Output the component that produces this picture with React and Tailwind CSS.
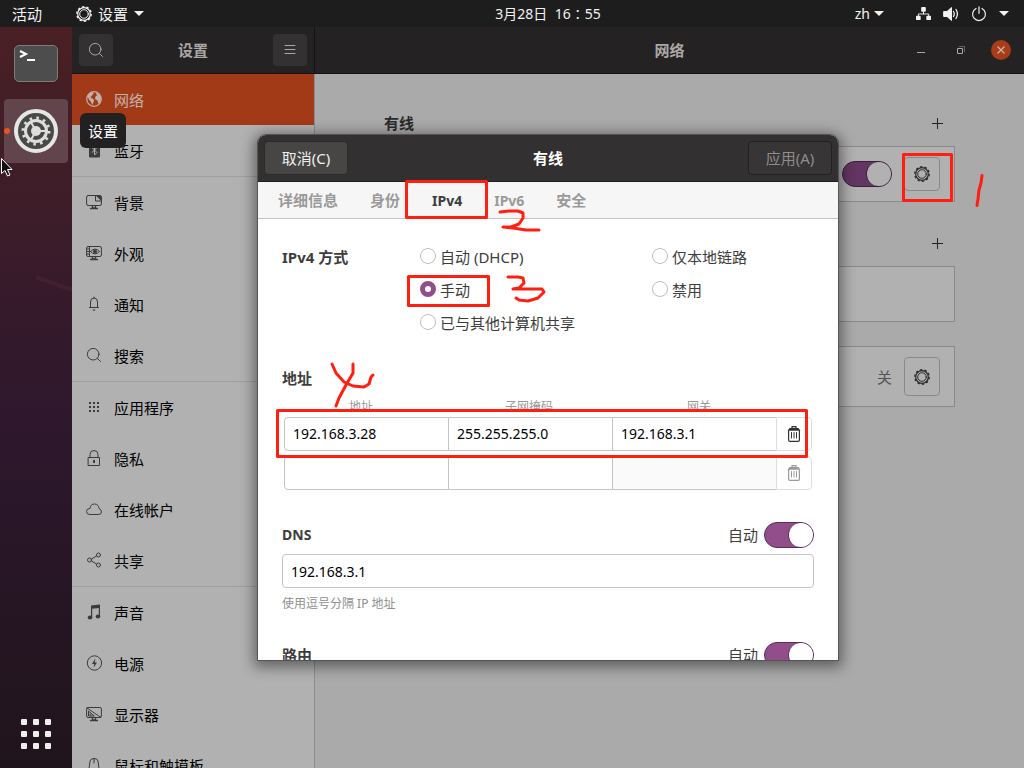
import React, { useState } from "react";

const stroke = {
  fill: "none",
  stroke: "currentColor",
  strokeWidth: 1,
  strokeLinecap: "round",
  strokeLinejoin: "round",
};

const Icon = ({ children, className = "size-4" }) => (
  <svg viewBox="0 0 16 16" className={className} aria-hidden="true" {...stroke}>
    {children}
  </svg>
);

const GearIcon = () => (
  <Icon>
    <circle cx="8" cy="8" r="6.3" strokeWidth="1.2" />
    <circle cx="8" cy="8" r="4.3" strokeWidth="1" />
    <circle cx="8" cy="8" r="7.2" strokeWidth="1.4" strokeLinecap="butt" strokeDasharray="2.4 2.124" />
  </Icon>
);

const SearchIcon = () => (
  <Icon>
    <circle cx="7.2" cy="7.2" r="5.8" />
    <path d="M11.5 11.5 14.5 14.5" />
  </Icon>
);

const TrashIcon = () => (
  <Icon>
    <path d="M6 2V.7h4V2" strokeWidth="1.3" />
    <path d="M1.5 4.8 3.5 2h9l2 2.800z" fill="currentColor" stroke="none" />
    <path d="M2.600 4.500V14q0 1.400 1.400 1.400h8q1.400 0 1.400-1.400V4.500" strokeWidth="1.200" />
    <path d="M5.500 6.500v5.500M8 6.500v5.500M10.500 6.500v5.500" />
  </Icon>
);

const Caret = () => (
  <svg viewBox="0 0 10 5" className="h-[5px] w-[10px]" aria-hidden="true">
    <path d="M0 0h10L5 5z" fill="currentColor" />
  </svg>
);

const screen = (
  <>
    <rect x=".6" y="1.500" width="14.800" height="10" rx="1.500" />
    <path d="M6.500 12v2h3v-2M4.500 14.500h7" strokeWidth="1.300" />
  </>
);

const icons = {
  network: (
    <Icon>
      <circle cx="8" cy="8" r="7.300" strokeWidth="1.200" />
      <path
        d="M1.500 5 4 2l3-1 .5 2L6 4.500 4.500 6l1 1.500H7L8 9.500 6.500 14l-1.500-3-2-2.500zM9.500 1.500l4 2L15 7l-.5 4-2 2-1-3.500L9 8l.5-2.500L11 4.500z"
        fill="currentColor"
        stroke="none"
      />
    </Icon>
  ),
  bluetooth: (
    <Icon>
      <rect x="3" y=".5" width="11" height="15" rx="1" fill="currentColor" stroke="none" />
      <path d="M6 5.500 11 10.500 8.500 13V3L11 5.500 6 10.500" stroke="#b1b1b1" />
    </Icon>
  ),
  background: (
    <Icon>
      {screen}
      <path d="M9.500 1.500v5.500h6" />
      <path d="M9.500 1.500h4q2 0 2 2V7z" fill="currentColor" stroke="none" />
    </Icon>
  ),
  appearance: (
    <Icon>
      {screen}
      <path d="M3.500 1.500v10M1 4h2.500M1 6.500h2.500M1 9h2.500" />
      <path d="M4.500 6.500Q9 1.500 13.500 6.500 9 11.500 4.500 6.500" />
      <circle cx="9" cy="6.500" r="1.600" fill="currentColor" />
    </Icon>
  ),
  bell: (
    <Icon>
      <path d="M3.500 11.500h9M4.500 11.500V6Q4.500 2 8 2t3.500 4v5.500M8 2V1" />
      <path d="M6.500 13.500h3q-.3 1.200-1.500 1.200t-1.500-1.200" fill="currentColor" stroke="none" />
    </Icon>
  ),
  search: <SearchIcon />,
  apps: (
    <Icon>
      <g fill="currentColor" stroke="none">
        {[3, 7, 11].map((x) => [3, 7, 11].map((y) => <rect key={`${x}-${y}`} x={x} y={y} width="2" height="2" />))}
      </g>
    </Icon>
  ),
  lock: (
    <Icon>
      <rect x="2.500" y="7.500" width="11" height="8" />
      <path d="M4 7.500V4.500Q4 .5 8 .5t4 4v3" />
      <rect x="7" y="10" width="2" height="3" fill="currentColor" stroke="none" />
    </Icon>
  ),
  cloud: (
    <Icon>
      <path d="M3.500 13.500Q.5 13.500.5 10.500T4 7.500Q4.500 3 8.500 3t4.500 4.500Q15.500 8.500 15.500 11t-3 2.500z" />
    </Icon>
  ),
  share: (
    <Icon>
      <circle cx="3.500" cy="8" r="2" />
      <circle cx="12.500" cy="3" r="2" />
      <circle cx="12.500" cy="13" r="2" />
      <path d="m5.500 7 5-3M5.500 9l5 3" />
    </Icon>
  ),
  music: (
    <Icon>
      <path d="M5 1.500 14 .5V12h-1.200V4L6.200 4.700V14H5z" fill="currentColor" stroke="none" />
      <ellipse cx="4" cy="13.500" rx="2.300" ry="2" fill="currentColor" stroke="none" />
      <ellipse cx="12" cy="12.500" rx="2.300" ry="2" fill="currentColor" stroke="none" />
    </Icon>
  ),
  power: (
    <Icon>
      <circle cx="8.500" cy="8" r="7.200" />
      <path d="M9.300 3.500 6 9h2.200l-.5 3.500L11 7.500H8.800z" fill="currentColor" stroke="none" />
    </Icon>
  ),
  display: (
    <Icon>
      {screen}
      <path d="m1 2 14 9.500M2.500 5.500v4.500h5.500zM4 8v1h1" />
    </Icon>
  ),
  mouse: (
    <Icon>
      <path d="M2.500 16 4 4Q4.500 1.500 8 1.500T12 4l1.500 12M8 1.500V6" />
    </Icon>
  ),
};

const menuGroups = [
  [
    { name: "网络", icon: "network", active: true },
    { name: "蓝牙", icon: "bluetooth" },
  ],
  [
    { name: "背景", icon: "background" },
    { name: "外观", icon: "appearance" },
    { name: "通知", icon: "bell" },
    { name: "搜索", icon: "search" },
  ],
  [
    { name: "应用程序", icon: "apps" },
    { name: "隐私", icon: "lock" },
    { name: "在线帐户", icon: "cloud" },
    { name: "共享", icon: "share" },
  ],
  [
    { name: "声音", icon: "music" },
    { name: "电源", icon: "power" },
    { name: "显示器", icon: "display" },
    { name: "鼠标和触摸板", icon: "mouse" },
  ],
];

const TopBar = () => (
  <header className="flex h-[27px] shrink-0 items-center bg-[#1d1d1d] text-[#f2f2f2]">
    <button className="w-[72px] pl-3 text-left">活动</button>
    <div className="grid grow grid-cols-[1fr_auto_1fr] items-center">
      <button className="flex items-center gap-[6px] justify-self-start pl-1">
        <GearIcon />
        设置
        <Caret />
      </button>
      <time className="whitespace-pre text-[14px]">3月28日  16∶55</time>
      <div className="flex items-center justify-self-end pr-[15px]">
        <button className="mr-8 flex items-center gap-1 text-[14px]">
          zh
          <Caret />
        </button>
        <button className="flex items-center gap-3" aria-label="系统">
          <Icon className="size-[15px]">
            <g fill="currentColor" stroke="none">
              <rect x="5.500" y="1" width="5" height="5" rx="1" />
              <rect x="0" y="10.500" width="5" height="4.500" rx="1" />
              <rect x="11" y="10.500" width="5" height="4.500" rx="1" />
            </g>
            <path d="M8 6v2.500M2.500 10.500v-2h11v2" />
          </Icon>
          <Icon>
            <path d="M1 5.500h3L8.500 1.500v13L4 10.500H1z" fill="currentColor" />
            <path d="M10.500 5.500q1.500 2.500 0 5M13 3.500q2.800 4.500 0 9" strokeWidth="1.300" />
          </Icon>
          <Icon>
            <path d="M5 2.500a6.400 6.400 0 1 0 6 0M8 .8v6.500" strokeWidth="1.200" />
          </Icon>
          <Caret />
        </button>
      </div>
    </div>
  </header>
);

const Dock = () => (
  <nav className="relative flex w-[72px] shrink-0 flex-col items-center bg-linear-to-b from-[#4a2024] via-[#2d172d] via-55% to-[#20141b] pb-[19px] pt-[18px]">
    <svg className="absolute right-0 top-[248px] h-5 w-9" viewBox="0 0 36 20" aria-hidden="true">
      <path d="M0 2 36 15" stroke="#42202e" strokeWidth="4" />
    </svg>
    <button
      aria-label="终端"
      className="h-[37px] w-11 rounded-[5px] border border-[#7a8078] bg-[#4d4d4d] shadow"
    >
      <svg viewBox="0 0 42 35" aria-hidden="true" fill="none" stroke="#fff" strokeWidth="2">
        <path d="m5 5 6 3-6 3M12 14h8" />
      </svg>
    </button>
    <button
      aria-label="设置"
      className="relative mt-[17px] flex size-16 items-center justify-center rounded bg-[#62444c]"
    >
      <span className="absolute left-0 size-[6px] rounded-full bg-[#e95420]" />
      <svg viewBox="0 0 44 44" className="size-11" aria-hidden="true" fill="none">
        <circle cx="22" cy="22" r="20" fill="#484a49" stroke="#e6e6e4" strokeWidth="4" />
        <circle cx="22" cy="22" r="10.500" stroke="#dededc" strokeWidth="3" />
        <circle cx="22" cy="22" r="13" stroke="#dededc" strokeWidth="3" strokeDasharray="2.500 4.307" />
        <circle cx="22" cy="22" r="5" fill="#dededc" />
        <path d="M22 22h10M22 22l-5-8.700M22 22l-5 8.700" stroke="#dededc" strokeWidth="2" />
      </svg>
      <span
        role="tooltip"
        className="absolute left-[76px] top-[14px] z-20 flex h-[35px] w-[46px] items-center justify-center rounded-md bg-[#222020] text-white"
      >
        设置
      </span>
    </button>
    <button aria-label="显示应用程序" className="mt-auto grid grid-cols-3 gap-[6px]">
      {[...new Array(9)].map((_, index) => (
        <span key={index} className="size-[6px] rounded-[1px] bg-[#f0eeec]" />
      ))}
    </button>
  </nav>
);

const Sidebar = () => (
  <aside className="flex w-[243px] shrink-0 flex-col overflow-hidden">
    <div className="flex h-[47px] shrink-0 items-center justify-between border-b border-r border-[#141313] bg-[#242223] px-[7px] text-[#aaa8a6]">
      <button
        aria-label="搜索"
        className="flex h-8 w-[34px] items-center justify-center rounded bg-[#333132]"
      >
        <SearchIcon />
      </button>
      <h1 className="font-bold">设置</h1>
      <button
        aria-label="菜单"
        className="flex h-8 w-[34px] items-center justify-center rounded bg-[#333132]"
      >
        <Icon>
          <path d="M3 3.500h10M3 7.500h10M3 11.500h10" />
        </Icon>
      </button>
    </div>
    <div className="min-h-0 grow overflow-hidden border-r border-[#8d8d8d] bg-[#b1b1b1]">
      {menuGroups.map((group, index) => (
        <ul key={index} className="border-b border-[#a0a0a0]">
          {group.map((item) => (
            <li key={item.name}>
              <a
                href="#"
                className={
                  item.active
                    ? "flex h-[51px] items-center gap-3 bg-[#a23a17] px-[14px] text-[#c2b1aa]"
                    : "flex h-[51px] items-center gap-3 px-[14px] text-black"
                }
              >
                <span className={item.active ? "-mt-[2px]" : "-mt-[2px] text-[#3b3b3b]"}>
                  {icons[item.icon]}
                </span>
                {item.name}
              </a>
            </li>
          ))}
        </ul>
      ))}
    </div>
  </aside>
);

const Switch = ({ label, dim }) => (
  <input
    type="checkbox"
    role="switch"
    aria-label={label}
    defaultChecked
    className={
      dim
        ? "flex h-[26px] w-[50px] appearance-none justify-end rounded-full border border-[#3a203b] bg-[#643462] before:h-6 before:w-[25px] before:rounded-full before:border-l before:border-[#3a203b] before:bg-[#b1b1b1]"
        : "flex h-[26px] w-[50px] appearance-none justify-end rounded-full border border-[#572d55] bg-[#924d8b] before:h-6 before:w-[25px] before:rounded-full before:border-l before:border-[#572d55] before:bg-white"
    }
  />
);

const AddButton = ({ label }) => (
  <button aria-label={label} className="flex h-9 w-9 items-center justify-center text-[#222]">
    <svg viewBox="0 0 11 11" className="size-[11px]" aria-hidden="true">
      <path d="M0 5.500h11M5.500 0v11" stroke="currentColor" />
    </svg>
  </button>
);

const NetworkPage = () => (
  <main className="flex min-w-0 grow flex-col">
    <div className="grid h-[47px] shrink-0 grid-cols-[1fr_auto_1fr] items-center border-b border-[#141313] bg-[#242223] text-[#aaa8a6]">
      <span />
      <h2 className="font-bold">网络</h2>
      <div className="flex items-center gap-5 justify-self-end pr-[13px]">
        <button aria-label="最小化" className="flex size-5 items-center justify-center">
          <span className="mt-1 h-px w-2 bg-current" />
        </button>
        <button aria-label="还原" className="flex size-5 items-center justify-center">
          <svg viewBox="0 0 8 8" className="size-2" aria-hidden="true" fill="none" stroke="currentColor">
            <path d="M.5 2.500h5v5h-5z" />
            <path d="M2 .5h5.500V6" opacity=".5" />
          </svg>
        </button>
        <button
          aria-label="关闭"
          className="flex size-5 items-center justify-center rounded-full bg-[#a83c19] text-[#c9b4ac]"
        >
          <svg viewBox="0 0 8 8" className="size-2" aria-hidden="true">
            <path d="m.5.5 7 7m0-7-7 7" stroke="currentColor" strokeWidth="1.300" />
          </svg>
        </button>
      </div>
    </div>
    <div className="grow bg-[#aaa] px-4 pt-[26px]">
      <div className="mx-auto max-w-[571px]">
        <div className="flex h-[46px] items-center justify-between">
          <h3 className="font-bold text-[#2b2b2b]">有线</h3>
          <AddButton label="添加有线" />
        </div>
        <div className="relative flex h-14 items-center justify-end gap-3 border border-[#8a8a8a] bg-[#b1b1b1] pr-[14px]">
          <Switch label="有线" dim />
          <button
            aria-label="有线选项"
            className="flex h-[34px] w-9 items-center justify-center rounded border border-[#8a8a8a] text-[#2b2b2b]"
          >
            <GearIcon />
          </button>
          {/* mark 1 */}
          <svg
            viewBox="902 153 85 55"
            className="pointer-events-none absolute -right-[33px] top-[6px] z-20 h-[55px] w-[85px]"
            aria-hidden="true"
            fill="none"
            stroke="#ff1f10"
            strokeWidth="3"
            strokeLinecap="round"
            strokeLinejoin="round"
          >
            <rect x="903.500" y="154.500" width="48" height="46" />
            <path d="M982 175.500 981 183 979 190 978 199 977 205.500" />
          </svg>
        </div>
        <div className="mt-[18px] flex h-[46px] items-center justify-end">
          <AddButton label="添加 VPN" />
        </div>
        <div className="h-14 border border-[#8a8a8a] bg-[#b1b1b1]" />
        <div className="mt-6 flex h-[61px] items-center justify-end gap-3 border border-[#8a8a8a] bg-[#b1b1b1] pr-[14px]">
          <span className="text-[#555]">关</span>
          <button
            aria-label="代理选项"
            className="flex h-[39px] w-9 items-center justify-center rounded border border-[#8a8a8a] text-[#2b2b2b]"
          >
            <GearIcon />
          </button>
        </div>
      </div>
    </div>
  </main>
);

const tabs = ["详细信息", "身份", "IPv4", "IPv6", "安全"];

const methods = ["自动 (DHCP)", "仅本地链路", "手动", "禁用", "已与其他计算机共享"];

const addresses = [
  { address: "192.168.3.28", mask: "255.255.255.0", gateway: "192.168.3.1" },
  { address: "", mask: "", gateway: "", empty: true },
];

const WiredDialog = () => {
  const [method, setMethod] = useState("手动");
  return (
    <section
      role="dialog"
      aria-label="有线"
      className="relative h-[525px] max-h-full w-[580px] overflow-hidden rounded-t-lg bg-white text-[#3d3d3d] shadow-[0_0_0_1px_#565454,0_3px_14px_4px_rgba(0,0,0,0.45)]"
    >
      <div className="grid h-[47px] grid-cols-[1fr_auto_1fr] items-center border-b border-[#1f1d1d] bg-[#323030] px-[6px]">
        <button className="h-[34px] w-[84px] justify-self-start rounded border border-[#2c2a2a] bg-[#484644] text-[#eee]">
          取消(C)
        </button>
        <h2 className="font-bold text-white">有线</h2>
        <button
          disabled
          className="h-[34px] w-[84px] justify-self-end rounded border border-[#222020] bg-[#373535] text-[#8f8d8c]"
        >
          应用(A)
        </button>
      </div>

      <div role="tablist" className="flex h-[37px] gap-8 border-b border-[#c4c4c4] bg-[#f6f6f6] pl-5">
        {tabs.map((tab) => (
          <button
            key={tab}
            role="tab"
            aria-selected={tab === "IPv4"}
            className={tab === "IPv4" ? "font-bold text-[#3d3d3d]" : "font-bold text-[#9a9a9a]"}
          >
            {tab.startsWith("IP") ? <span className="text-[14px]">{tab}</span> : tab}
          </button>
        ))}
      </div>

      <div className="px-6 pt-[22px]">
        {/* method */}
        <div className="flex">
          <h3 className="w-[138px] font-bold leading-[33px]">IPv4 方式</h3>
          <div className="grid grow grid-cols-[232px_1fr]">
            {methods.map((item) => (
              <label key={item} className="flex h-[33px] items-center gap-1 pb-[2px]">
                <input
                  type="radio"
                  name="method"
                  checked={method === item}
                  onChange={() => setMethod(item)}
                  className="mb-[2px] size-4 appearance-none rounded-full border border-[#bdbdbd] checked:border-[5px] checked:border-[#924d8b]"
                />
                {item}
              </label>
            ))}
          </div>
        </div>

        {/* addresses */}
        <h3 className="mt-[27px] font-bold leading-[22px]">地址</h3>
        <div className="mt-[9px] flex h-[19px] text-center text-[12px] leading-[18px] text-[#999]">
          <span className="w-[158px]">地址</span>
          <span className="w-[178px]">子网掩码</span>
          <span className="w-[162px]">网关</span>
        </div>
        <div className="flex flex-col gap-[5px]">
          {addresses.map((row, index) => (
            <div key={index} className="mx-[2px] flex h-[34px] text-[14px] text-black">
              <input
                aria-label="地址"
                defaultValue={row.address}
                className="w-[165px] rounded-l border border-[#c4c4c4] px-2"
              />
              <input
                aria-label="子网掩码"
                defaultValue={row.mask}
                className="w-[163px] border-y border-[#c4c4c4] px-2"
              />
              <input
                aria-label="网关"
                defaultValue={row.gateway}
                disabled={row.empty}
                className="w-[164px] border border-r-0 border-[#c4c4c4] px-2 disabled:bg-[#fafafa]"
              />
              <button
                aria-label="删除"
                disabled={row.empty}
                className="flex grow items-center justify-center rounded-r border border-[#dedede] text-[#333] disabled:text-[#999]"
              >
                <TrashIcon />
              </button>
            </div>
          ))}
        </div>

        {/* dns */}
        <div className="mt-8 flex h-8 items-start">
          <h3 className="grow text-[14px] font-bold leading-[26px]">DNS</h3>
          <span className="mr-[6px] leading-[27px]">自动</span>
          <Switch label="DNS 自动" />
        </div>
        <input
          aria-label="DNS"
          defaultValue="192.168.3.1"
          className="h-[34px] w-full rounded border border-[#c4c4c4] px-2 text-[14px] text-black"
        />
        <p className="mt-[7px] text-[12px] leading-[18px] text-[#8f8f8f]">使用逗号分隔 IP 地址</p>

        {/* routes */}
        <div className="mt-[29px] flex items-start">
          <h3 className="grow font-bold leading-[27px]">路由</h3>
          <span className="mr-[6px] leading-[27px]">自动</span>
          <Switch label="路由自动" />
        </div>
      </div>

      {/* marks 2, 3 and 4 */}
      <svg
        viewBox="258 135 580 525"
        className="pointer-events-none absolute left-0 top-0 h-[525px] w-[580px]"
        aria-hidden="true"
        fill="none"
        stroke="#ff1f10"
        strokeWidth="3"
        strokeLinecap="round"
        strokeLinejoin="round"
      >
        <rect x="406.500" y="181.500" width="80" height="36" />
        <path d="M500 212 509 211H518L523 213V218L519 224 511 227H503L513 228 526 230 539 230" />
        <rect x="408.500" y="276.500" width="80" height="29" />
        <path d="M508 277H518L523 278 524 283 519 288 513 289H530L542 289 544 292 538 298 528 301 519 300 516 298" />
        <rect x="277.500" y="410.500" width="529" height="46" />
        <path d="M332 364 336 373 344 382 353 386 364 387 369 384 371 377 373 375M353 364V373L346 385 339 398 336 406" />
      </svg>
    </section>
  );
};

const App = () => {
  return (
    <div className="relative flex h-screen flex-col overflow-hidden font-['Noto_Sans','Noto_Sans_CJK_SC',sans-serif] text-[15px] leading-[20px]">
      <TopBar />
      <div className="flex min-h-0 grow">
        <Dock />
        <div className="relative flex min-w-0 grow">
          <Sidebar />
          <NetworkPage />
          <div className="absolute inset-0 z-10 flex items-center justify-center">
            <WiredDialog />
          </div>
        </div>
      </div>
      {/* pointer */}
      <svg
        viewBox="0 0 14 20"
        className="absolute left-0 top-[157px] z-30 h-5 w-[14px]"
        aria-hidden="true"
      >
        <path d="M1.500 1.500v15l3.500-3 2.500 5.500 2.500-1-2.500-5.500h4.500z" fill="#111" stroke="#fff" />
      </svg>
    </div>
  );
};

export default App;
